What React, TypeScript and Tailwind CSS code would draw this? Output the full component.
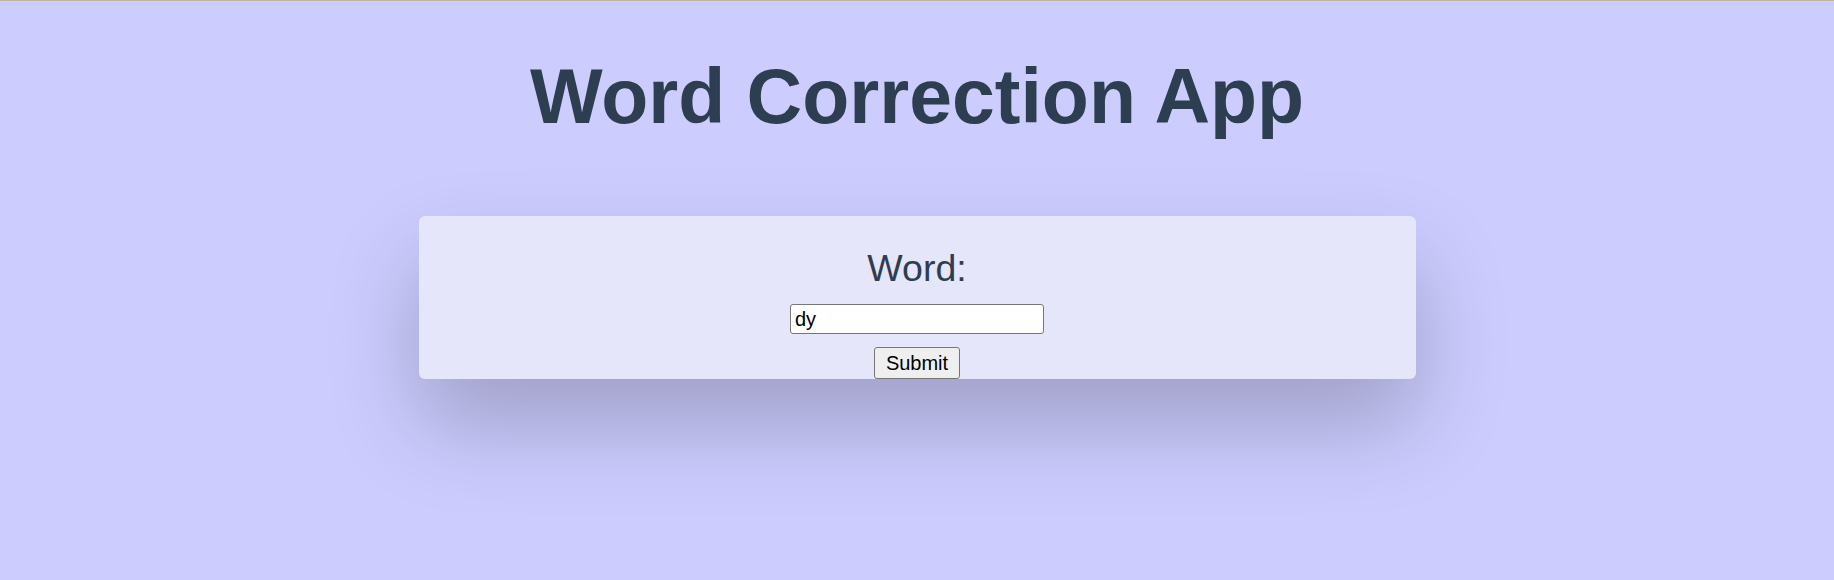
import { useState } from "react";

export default function App() {
    const [word, setWord] = useState("dy");

    return (
        <div className="min-h-[580px] w-full bg-[#ccccff] font-['Liberation_Sans',Arial,sans-serif] border-t border-[#bdb59d]">
            <div className="flex flex-col items-center pt-[51px]">
                <h1 className="text-[77px] leading-[89px] font-bold text-[#2c3e50] mb-[75px]">
                    Word Correction App
                </h1>

                <form
                    className="w-[997px] h-[163px] bg-[#e6e6fa] rounded-[6px] shadow-[0_45px_90px_rgba(0,0,0,0.22)] flex flex-col items-center pt-[31px]"
                    onSubmit={(e) => e.preventDefault()}
                >
                    <label htmlFor="word" className="text-[37.5px] leading-[43px] text-[#2c3e50]">
                        Word:
                    </label>
                    <input
                        id="word"
                        type="text"
                        value={word}
                        onChange={(e) => setWord(e.target.value)}
                        className="mt-[14px] w-[254px] h-[30px] bg-white border border-[#767676] rounded-[3px] px-[4px] text-[20px] text-black outline-none"
                    />
                    <button
                        type="submit"
                        className="mt-[13px] w-[86px] h-[32px] bg-[#efefef] border border-[#767676] rounded-[3px] text-[20px] text-black"
                    >
                        Submit
                    </button>
                </form>
            </div>
        </div>
    );
}
